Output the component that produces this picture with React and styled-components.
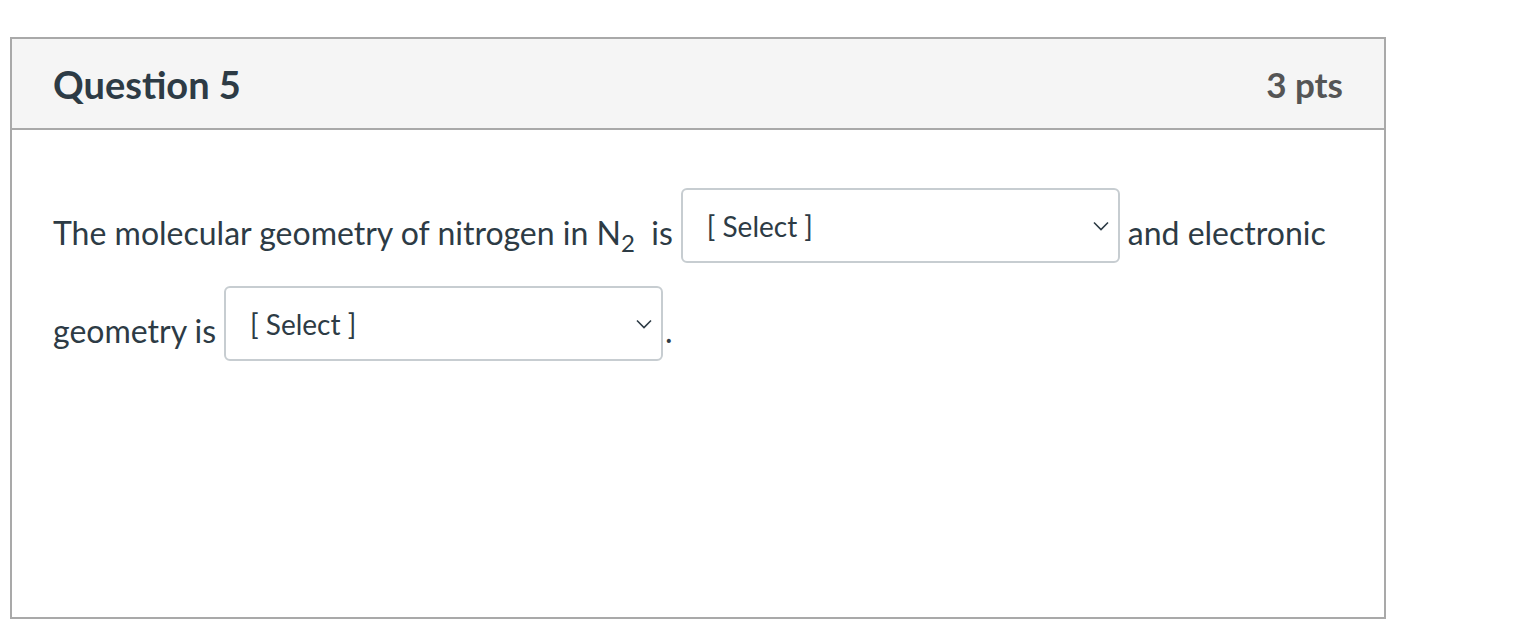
import React from 'react';
import styled, { createGlobalStyle } from 'styled-components';

const GlobalStyle = createGlobalStyle`
  body {
    margin: 0;
    background: #ffffff;
    font-family: Lato, "Open Sans", sans-serif;
    color: #2d3b45;
  }
`;

const Page = styled.div`
  padding: 37px 0 0 10px;
`;

const Card = styled.div`
  width: 1376px;
  box-sizing: border-box;
  border: 2px solid #a9a9a9;
  background: #ffffff;
`;

const Header = styled.div`
  display: flex;
  justify-content: space-between;
  align-items: center;
  height: 89px;
  padding: 0 41px;
  background: #f5f5f5;
  border-bottom: 2px solid #a9a9a9;
`;

const Title = styled.h2`
  margin: 0;
  font-size: 38px;
  font-weight: 700;
  color: #2d3b45;
`;

const Points = styled.div`
  font-size: 35px;
  font-weight: 700;
  color: #555555;
`;

const Body = styled.div`
  min-height: 487px;
  box-sizing: border-box;
  padding: 47px 41px 0;
`;

const Text = styled.p`
  margin: 0;
  font-size: 32px;
  line-height: 42px;
`;

const Sub = styled.sub`
  font-size: 24px;
  line-height: 0;
`;

const SelectBox = styled.span`
  display: inline-flex;
  align-items: center;
  justify-content: space-between;
  box-sizing: border-box;
  width: 439px;
  height: 75px;
  margin: 11px ${(p) => p.gapRight}px 12px 8px;
  padding: 0 9px 0 24px;
  border: 2px solid #c7cdd1;
  border-radius: 6px;
  background: #ffffff;
  font-size: 28px;
  line-height: 34px;
  vertical-align: 8px;
  color: #2d3b45;
`;

const Chevron = () => (
  <svg width="16" height="10" viewBox="0 0 16 10" fill="none">
    <path d="M1 1.5 L8 8.5 L15 1.5" stroke="#2d3b45" strokeWidth="1.6" />
  </svg>
);

const Select = ({ gapRight }) => (
  <SelectBox gapRight={gapRight}>
    <span>[ Select ]</span>
    <Chevron />
  </SelectBox>
);

const App = () => (
  <Page>
    <GlobalStyle />
    <Card>
      <Header>
        <Title>Question 5</Title>
        <Points>3 pts</Points>
      </Header>
      <Body>
        <Text>
          The molecular geometry of nitrogen in N<Sub>2</Sub>&nbsp; is
          <Select gapRight={8} />
          and electronic geometry is
          <Select gapRight={2} />.
        </Text>
      </Body>
    </Card>
  </Page>
);

export default App;
